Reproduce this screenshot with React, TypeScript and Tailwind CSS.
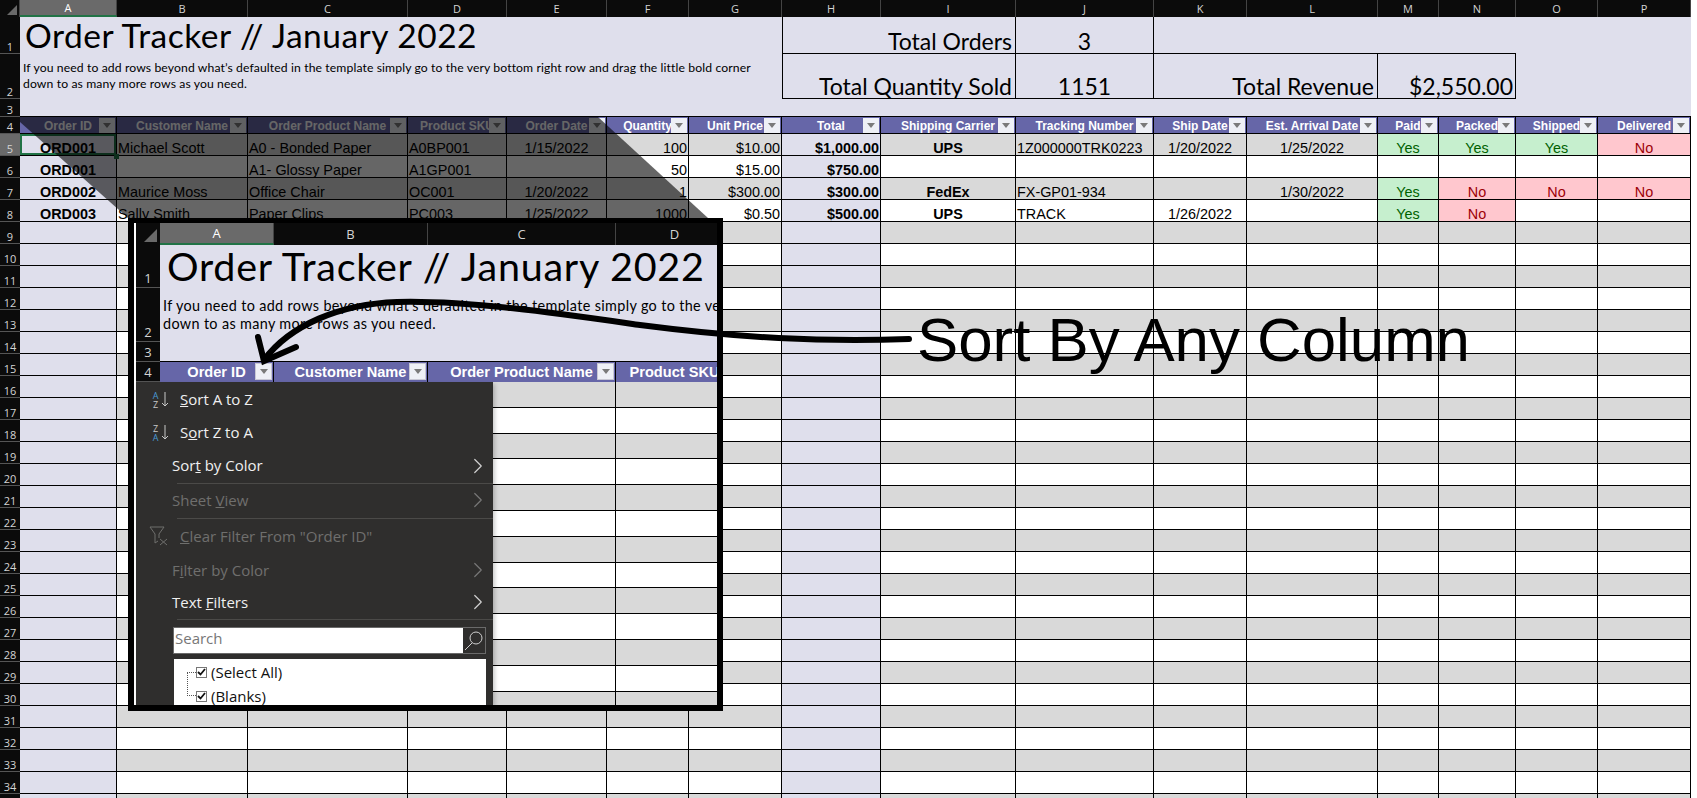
import { ChevronRight } from 'lucide-react';
import type { ReactNode } from 'react';

const columns = ['A', 'B', 'C', 'D', 'E', 'F', 'G', 'H', 'I', 'J', 'K', 'L', 'M', 'N', 'O', 'P'];

const headers = [
  'Order ID',
  'Customer Name',
  'Order Product Name',
  'Product SKU',
  'Order Date',
  'Quantity',
  'Unit Price',
  'Total',
  'Shipping Carrier',
  'Tracking Number',
  'Ship Date',
  'Est. Arrival Date',
  'Paid',
  'Packed',
  'Shipped',
  'Delivered',
];

const orders = [
  ['ORD001', 'Michael Scott', 'A0 - Bonded Paper', 'A0BP001', '1/15/2022', '100', '$10.00', '$1,000.00', 'UPS', '1Z000000TRK0223', '1/20/2022', '1/25/2022', 'Yes', 'Yes', 'Yes', 'No'],
  ['ORD001', '', 'A1- Glossy Paper', 'A1GP001', '', '50', '$15.00', '$750.00', '', '', '', '', '', '', '', ''],
  ['ORD002', 'Maurice Moss', 'Office Chair', 'OC001', '1/20/2022', '1', '$300.00', '$300.00', 'FedEx', 'FX-GP01-934', '', '1/30/2022', 'Yes', 'No', 'No', 'No'],
  ['ORD003', 'Sally Smith', 'Paper Clips', 'PC003', '1/25/2022', '1000', '$0.50', '$500.00', 'UPS', 'TRACK', '1/26/2022', '', 'Yes', 'No', '', ''],
];

function cellAlign(col: number) {
  if (col === 0 || col === 8) return 'justify-center font-bold';
  if (col === 7) return 'justify-end font-bold pr-[1px]';
  if (col === 5 || col === 6) return 'justify-end pr-[1px]';
  if (col === 4 || col === 10 || col === 11) return 'justify-center';
  if (col >= 12) return 'justify-center';
  return 'justify-start pl-[1px]';
}

function cellBg(col: number, row: number, value: string) {
  if (value === 'Yes') return 'bg-[#c6efce] text-[#006100]';
  if (value === 'No') return 'bg-[#ffc7ce] text-[#9c0006]';
  if (col === 0 || col === 7) return 'bg-[#dfdfec]';
  return row % 2 === 1 ? 'bg-[#d9d9d9]' : 'bg-white';
}

function FilterButton({ large }: { large?: boolean }) {
  return (
    <span
      className={
        large
          ? 'absolute top-[1px] right-[1px] flex h-[17px] w-[17px] items-center justify-center bg-[#eef0f6] border border-[#c8c8d4]'
          : 'absolute top-[1px] right-[1px] flex h-[15px] w-[16px] items-center justify-center bg-[#eef0f6]'
      }
    >
      <svg width="8" height="5" viewBox="0 0 8 5">
        <polygon points="0,0 8,0 4,5" fill="#7a7a7a" />
      </svg>
    </span>
  );
}

function RowLabel({ n, active }: { n?: number; active?: boolean }) {
  return (
    <div
      className={`flex items-end justify-center border-b border-[#555] pb-[1px] font-['Open_Sans',sans-serif] text-[11px] leading-none text-[#d4d4d4] ${active ? 'bg-[#6a6a6a]' : 'bg-[#0b0b0b]'}`}
    >
      {n}
    </div>
  );
}

function Sheet() {
  const blankRows = Array.from({ length: 27 }, (_, i) => i + 9);
  return (
    <div className="grid w-[1691px] grid-cols-[20px_97px_131px_160px_99px_100px_82px_93px_99px_135px_138px_93px_131px_61px_77px_82px_93px] grid-rows-[17px_37px_45px_18px_17px_repeat(31,22px)] font-['Liberation_Sans',sans-serif] text-black">
      <div className="flex items-end justify-end border-r border-[#444] bg-[#0b0b0b] p-[2px]">
        <span className="h-0 w-0 border-b-[10px] border-l-[10px] border-b-[#6a6a6a] border-l-transparent" />
      </div>
      {columns.map((c, i) => (
        <div
          key={c}
          className={`flex items-center justify-center border-r border-[#444] pb-[1px] font-['Open_Sans',sans-serif] text-[11px] leading-none text-[#d4d4d4] ${i === 0 ? 'border-b-2 border-b-[#217346] bg-[#6a6a6a] text-white' : 'bg-[#0b0b0b]'}`}
        >
          {c}
        </div>
      ))}

      <RowLabel n={1} />
      <div className="col-span-7 bg-[#dfdfec] pl-[5px] font-['Lato',sans-serif] text-[33.5px] leading-[36px] tracking-[0.5px] whitespace-nowrap">
        Order Tracker // January 2022
      </div>
      <div className="col-span-2 flex items-end justify-end border-x border-b border-black bg-[#dfdfec] pr-[3px] font-['Lato',sans-serif] text-[23px] leading-[23px]">
        Total Orders
      </div>
      <div className="flex items-end justify-center border-r border-b border-black bg-[#dfdfec] font-['Lato',sans-serif] text-[23px] leading-[23px]">
        3
      </div>
      <div className="col-span-4 border-b border-black bg-[#dfdfec]" />
      <div className="col-span-2 bg-[#dfdfec]" />

      <RowLabel n={2} />
      <div className="col-span-7 bg-[#dfdfec] pt-[6px] pl-[3px] font-['Lato',sans-serif] text-[12.2px] leading-[16px] tracking-[0.11px] whitespace-nowrap">
        <p>If you need to add rows beyond what’s defaulted in the template simply go to the very bottom right row and drag the little bold corner</p>
        <p>down to as many more rows as you need.</p>
      </div>
      <div className="col-span-2 flex items-end justify-end border-x border-b border-black bg-[#dfdfec] pr-[3px] font-['Lato',sans-serif] text-[23px] leading-[23px]">
        Total Quantity Sold
      </div>
      <div className="flex items-end justify-center border-r border-b border-black bg-[#dfdfec] font-['Lato',sans-serif] text-[23px] leading-[23px]">
        1151
      </div>
      <div className="col-span-2 flex items-end justify-end border-r border-b border-black bg-[#dfdfec] pr-[3px] font-['Lato',sans-serif] text-[23px] leading-[23px]">
        Total Revenue
      </div>
      <div className="col-span-2 flex items-end justify-end border-r border-b border-black bg-[#dfdfec] pr-[2px] font-['Lato',sans-serif] text-[23px] leading-[23px]">
        $2,550.00
      </div>
      <div className="col-span-2 bg-[#dfdfec]" />

      <RowLabel n={3} />
      <div className="col-span-16 border-b border-black bg-[#dfdfec]" />

      <RowLabel n={4} />
      {headers.map((h) => (
        <div
          key={h}
          className="relative flex items-center justify-center overflow-hidden border-r border-b border-black bg-[#6666a8] pt-[1px] text-[12px] font-bold whitespace-nowrap text-white"
        >
          {h}
          <FilterButton />
        </div>
      ))}

      {orders.map((row, r) => (
        <div key={r} className="contents">
          <RowLabel n={r + 5} active={r === 0} />
          {row.map((value, c) => (
            <div
              key={c}
              className={`relative flex items-center overflow-hidden border-r border-b border-black pt-[8px] text-[14.4px] whitespace-nowrap ${cellAlign(c)} ${cellBg(c, r + 1, value)}`}
            >
              {value}
              {r === 0 && c === 0 && (
                <span className="absolute inset-0 border-2 border-[#217346]" />
              )}
            </div>
          ))}
        </div>
      ))}

      {blankRows.map((n) => (
        <div key={n} className="contents">
          <RowLabel n={n < 35 ? n : undefined} />
          {columns.map((c, i) => (
            <div key={c} className={`border-r border-b border-black ${cellBg(i, n % 2, '')}`} />
          ))}
        </div>
      ))}
    </div>
  );
}

function SortIcon({ top, bottom }: { top: string; bottom: string }) {
  return (
    <span className="flex w-[44px] items-center justify-start pl-[14px]">
      <span className="flex w-[11px] flex-col items-center font-['Open_Sans',sans-serif] text-[9px] leading-[9px]">
        <span className={top === 'A' ? 'text-[#4a9ad4]' : 'text-[#c8c8c8]'}>{top}</span>
        <span className={bottom === 'A' ? 'text-[#4a9ad4]' : 'text-[#c8c8c8]'}>{bottom}</span>
      </span>
      <svg width="8" height="15" viewBox="0 0 8 15" fill="none" stroke="#c8c8c8" strokeWidth="1">
        <path d="M4 0v14M1 11l3 3 3-3" />
      </svg>
    </span>
  );
}

function MenuItem({
  height,
  icon,
  disabled,
  arrow,
  indent,
  children,
}: {
  height: string;
  icon?: ReactNode;
  disabled?: boolean;
  arrow?: boolean;
  indent?: boolean;
  children: ReactNode;
}) {
  return (
    <div className={`flex items-center pb-[2px] ${height} ${disabled ? 'text-[#6f6f6d]' : 'text-[#f0f0f0]'}`}>
      {icon}
      <span className={indent ? 'pl-[36px]' : ''}>{children}</span>
      {arrow && (
        <ChevronRight
          className={`mr-[2px] ml-auto ${disabled ? 'text-[#777]' : 'text-[#d0d0d0]'}`}
          size={26}
          strokeWidth={1.1}
        />
      )}
    </div>
  );
}

function Check() {
  return (
    <span className="flex h-[11px] w-[11px] items-center justify-center border border-[#777] bg-white">
      <svg width="9" height="8" viewBox="0 0 9 8" fill="none" stroke="#111" strokeWidth="1.8">
        <path d="M1 4l2.5 2.5L8 1" />
      </svg>
    </span>
  );
}

function FilterMenu() {
  return (
    <div className="absolute top-[159px] left-0 h-[323px] w-[357px] bg-[#2f2e2d] pt-[2px] font-['Open_Sans',sans-serif] text-[15px] leading-none shadow-[2px_2px_4px_rgba(0,0,0,0.2)]">
      <MenuItem height="h-[33px]" icon={<SortIcon top="A" bottom="Z" />}>
        <span className="underline">S</span>ort A to Z
      </MenuItem>
      <MenuItem height="h-[33px]" icon={<SortIcon top="Z" bottom="A" />}>
        S<span className="underline">o</span>rt Z to A
      </MenuItem>
      <MenuItem height="h-[33px]" arrow indent>
        Sor<span className="underline">t</span> by Color
      </MenuItem>
      <div className="ml-[41px] h-[1px] bg-[#4b4a48]" />
      <MenuItem height="h-[34px]" arrow indent disabled>
        Sheet <span className="underline">V</span>iew
      </MenuItem>
      <div className="ml-[41px] h-[1px] bg-[#4b4a48]" />
      <MenuItem
        height="h-[36px]"
        disabled
        icon={
          <span className="w-[44px] pl-[13px]">
            <svg width="20" height="20" viewBox="0 0 20 20" fill="none" stroke="#6f6f6d" strokeWidth="1">
              <path d="M1 1h14l-5 7v4M1 1l5 7v9l3-2M11 13l7 6M18 13l-7 6" />
            </svg>
          </span>
        }
      >
        <span className="underline">C</span>lear Filter From "Order ID"
      </MenuItem>
      <MenuItem height="h-[32px]" arrow indent disabled>
        F<span className="underline">i</span>lter by Color
      </MenuItem>
      <MenuItem height="h-[32px]" arrow indent>
        Text <span className="underline">F</span>ilters
      </MenuItem>
      <div className="ml-[41px] h-[1px] bg-[#4b4a48]" />
      <div className="mt-[7px] ml-[37px] flex h-[27px] w-[313px] border border-[#6a6a6a]">
        <div className="flex flex-1 items-center bg-white pb-[4px] pl-[1px] text-[#777]">Search</div>
        <div className="flex w-[22px] items-center justify-center">
          <svg width="20" height="21" viewBox="0 0 20 21" fill="none" stroke="#cfcfcf" strokeWidth="1">
            <circle cx="12" cy="8" r="6" />
            <path d="M8 13l-7 7" />
          </svg>
        </div>
      </div>
      <div className="relative mt-[5px] ml-[38px] h-[46px] w-[312px] overflow-hidden bg-white pt-[1px] pl-[22px] text-[#111]">
        <span className="absolute top-[13px] left-[13px] h-[24px] w-[9px] border-y border-l border-dotted border-[#555]" />
        <div className="flex h-[24px] items-center gap-[4px]">
          <Check />
          (Select All)
        </div>
        <div className="flex h-[24px] items-center gap-[4px]">
          <Check />
          (Blanks)
        </div>
      </div>
    </div>
  );
}

function RowLabelLarge({ n }: { n: number }) {
  return (
    <div className="flex items-end justify-center border-b border-[#555] bg-[#0b0b0b] pb-[2px] font-['Open_Sans',sans-serif] text-[13px] leading-none text-[#d4d4d4]">
      {n}
    </div>
  );
}

function Inset() {
  const rows = Array.from({ length: 13 }, (_, i) => i);
  const insetHeaders = ['Order ID', 'Customer Name', 'Order Product Name', 'Product SKU'];
  return (
    <div className="absolute top-[218px] left-[128px] h-[493px] w-[595px] overflow-hidden border-t-[5px] border-r-[6px] border-b-[6px] border-l-[6px] border-black bg-white pl-[2px]">
      <div className="relative grid w-[598px] grid-cols-[24px_114px_154px_188px_118px] grid-rows-[22px_43px_54px_20px_20px_repeat(13,25.8px)] font-['Liberation_Sans',sans-serif] text-black">
        <div className="flex items-end justify-end bg-[#0b0b0b] p-[3px]">
          <span className="h-0 w-0 border-b-[13px] border-l-[13px] border-b-[#6a6a6a] border-l-transparent" />
        </div>
        {columns.slice(0, 4).map((c, i) => (
          <div
            key={c}
            className={`flex items-center justify-center border-r border-[#444] font-['Open_Sans',sans-serif] text-[13px] leading-none text-[#d4d4d4] ${i === 0 ? 'border-b-2 border-b-[#217346] bg-[#6a6a6a] text-white' : 'bg-[#0b0b0b]'}`}
          >
            {c}
          </div>
        ))}

        <RowLabelLarge n={1} />
        <div className="col-span-4 bg-[#dfdfec] pl-[7px] font-['Lato',sans-serif] text-[39.5px] leading-[42px] tracking-[0.75px] whitespace-nowrap">
          Order Tracker // January 2022
        </div>
        <RowLabelLarge n={2} />
        <div className="col-span-4 overflow-hidden bg-[#dfdfec] pt-[9px] pl-[3px] font-['Lato',sans-serif] text-[14.4px] leading-[18px] tracking-[0.35px] whitespace-nowrap">
          <p>If you need to add rows beyond what’s defaulted in the template simply go to the very bottom right row</p>
          <p>down to as many more rows as you need.</p>
        </div>
        <RowLabelLarge n={3} />
        <div className="col-span-4 border-b border-black bg-[#dfdfec]" />
        <RowLabelLarge n={4} />
        {insetHeaders.map((h, i) => (
          <div
            key={h}
            className="relative flex items-center justify-center overflow-hidden border-r border-black bg-[#6666a8] pt-[1px] text-[14.6px] font-bold whitespace-nowrap text-white"
          >
            {h}
            {i < 3 && <FilterButton large />}
          </div>
        ))}

        {rows.map((r) => (
          <div key={r} className="contents">
            <div className="bg-[#0b0b0b]" />
            {insetHeaders.map((h) => (
              <div key={h} className={`border-r border-b border-black ${r % 2 === 0 ? 'bg-[#d9d9d9]' : 'bg-white'}`} />
            ))}
          </div>
        ))}

        <FilterMenu />
      </div>
    </div>
  );
}

export default function App() {
  return (
    <div className="relative h-[798px] w-[1697px] overflow-hidden bg-white">
      <Sheet />

      {/* selection handle of cell A5 */}
      <span className="absolute top-[154px] left-[114px] h-[5px] w-[5px] bg-[#217346]" />

      {/* shadow falling from the zoomed-in picture up to the header row */}
      <svg className="pointer-events-none absolute top-0 left-0" width="1697" height="798">
        <polygon points="20,117 598,117 708,218 128,218 20,122" fill="rgba(0,0,0,0.6)" />
      </svg>

      <Inset />

      <svg className="pointer-events-none absolute top-0 left-0" width="1697" height="798" fill="none" stroke="#000" strokeLinecap="round">
        <path d="M909 339C820 342 740 338 640 325C570 315 470 300 397 302C340 304 290 325 264 360" strokeWidth="6" />
        <path d="M258 337L264 361L296 347" strokeWidth="6" />
      </svg>

      <div className="absolute top-[305px] left-[917px] font-['Liberation_Sans',sans-serif] text-[61.8px] leading-[70px] whitespace-nowrap text-black">
        Sort By Any Column
      </div>
    </div>
  );
}
